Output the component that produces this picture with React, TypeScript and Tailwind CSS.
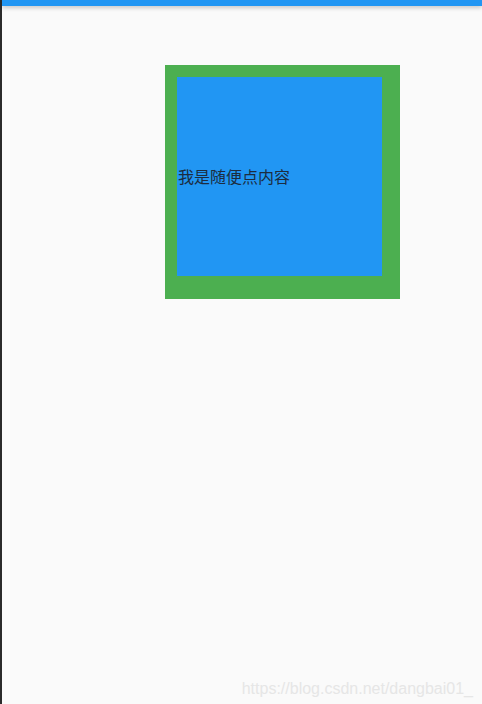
import React from "react";

export default function App() {
  return (
    <div className="relative flex h-[704px] w-[482px] overflow-hidden bg-[#fafafa]" style={{ fontFamily: '"Noto Sans", "Noto Sans CJK SC", sans-serif' }}>
      <div className="h-full w-[2px] shrink-0 bg-[#2b2b2b]" />
      <div className="flex flex-1 flex-col">
        <div className="z-10 h-[6px] w-full bg-[#2196f3] shadow-[0_2px_4px_rgba(0,0,0,0.2)]" />
        <div className="pl-[163px] pt-[59px]">
          <div className="flex h-[234px] w-[235px] flex-col bg-[#4caf50] pl-[12px] pt-[12px]">
            <div className="flex h-[199px] w-[205px] items-center bg-[#2196f3] pl-px pb-[2px]">
              <span className="text-[16px] leading-none text-[#1c2c40]" style={{ fontFamily: '"Noto Sans CJK SC", sans-serif' }}>我是随便点内容</span>
            </div>
          </div>
        </div>
      </div>
      <div className="absolute bottom-[7px] right-[9px] text-[16px] leading-none text-[#e6e6e6]" style={{ fontFamily: '"Liberation Sans", Arial, sans-serif' }}>
        https://blog.csdn.net/dangbai01_
      </div>
    </div>
  );
}
